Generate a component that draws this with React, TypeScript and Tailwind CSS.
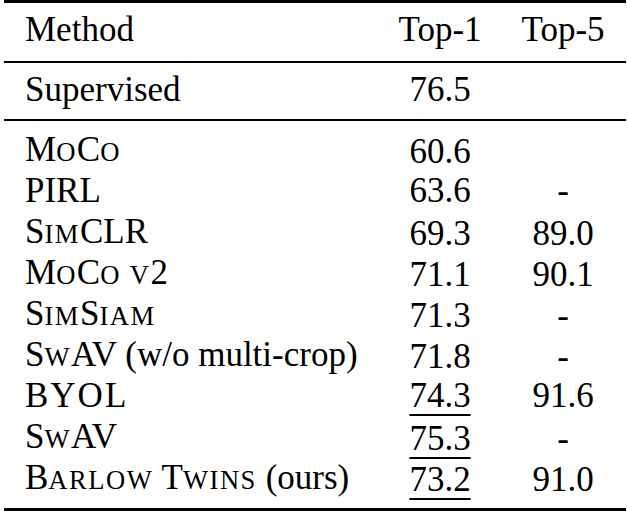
import React from 'react';

type Row = { name: React.ReactNode; top1: string; top5: string; best?: boolean };

// small caps: lowercase letters drawn as smaller capitals, a bit wider like LaTeX's small caps
const SC = ({ children }: { children: string }) => (
  <span>
    {children.split('').map((ch, i) =>
      ch >= 'a' && ch <= 'z' ? (
        <span key={i} className="text-[0.76em] uppercase tracking-[1.5px]">{ch}</span>
      ) : (
        <span key={i}>{ch}</span>
      )
    )}
  </span>
);

const rows: Row[] = [
  { name: <SC>MoCo</SC>, top1: '60.6', top5: '' },
  { name: 'PIRL', top1: '63.6', top5: '-' },
  { name: <SC>SimCLR</SC>, top1: '69.3', top5: '89.0' },
  { name: <SC>MoCo v2</SC>, top1: '71.1', top5: '90.1' },
  { name: <SC>SimSiam</SC>, top1: '71.3', top5: '-' },
  { name: <><SC>SwAV</SC> (w/o multi-crop)</>, top1: '71.8', top5: '-' },
  { name: <span className="tracking-[2px]">BYOL</span>, top1: '74.3', top5: '91.6', best: true },
  { name: <SC>SwAV</SC>, top1: '75.3', top5: '-', best: true },
  { name: <><SC>Barlow Twins</SC> (ours)</>, top1: '73.2', top5: '91.0', best: true },
];

const cols = 'grid grid-cols-[376px_120px_126px]';

export default function App() {
  return (
    <div className="w-[627px] h-[516px] bg-white text-black font-['Liberation_Serif','Times_New_Roman',serif] text-[35px] leading-[41px]">
      <div className="ml-[4px] w-[622px]">
        <div className="h-[3px] bg-black" />
        <div className={`${cols} pb-[5px] h-[58px] items-center`}>
          <div className="pl-[21px]">Method</div>
          <div className="text-center">Top-1</div>
          <div className="text-center">Top-5</div>
        </div>
        <div className="h-[2px] bg-black" />
        <div className={`${cols} pb-[4px] h-[56px] items-center`}>
          <div className="pl-[21px]">Supervised</div>
          <div className="text-center">76.5</div>
          <div className="text-center">{''}</div>
        </div>
        <div className="h-[2px] bg-black" />
        <div className="pt-[8px] pb-[10px]">
          {rows.map((r, i) => (
            <div key={i} className={`${cols} h-[41px] items-center`}>
              <div className="pl-[21px] whitespace-nowrap">{r.name}</div>
              <div className="text-center">
                <span className={r.best ? 'underline decoration-[1.5px] underline-offset-[7px]' : ''}>{r.top1}</span>
              </div>
              <div className="text-center">{r.top5}</div>
            </div>
          ))}
        </div>
        <div className="h-[3px] bg-black" />
      </div>
    </div>
  );
}
